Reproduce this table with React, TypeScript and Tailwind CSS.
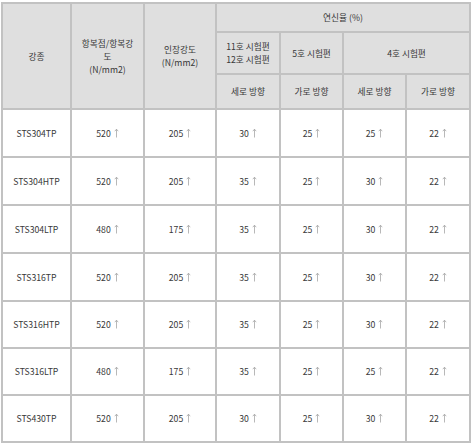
import React from 'react';

type Row = {
  grade: string;
  yieldPt: string;
  tensile: string;
  e11: string;
  e5: string;
  e4v: string;
  e4h: string;
};

const rows: Row[] = [
  { grade: 'STS304TP', yieldPt: '520', tensile: '205', e11: '30', e5: '25', e4v: '25', e4h: '22' },
  { grade: 'STS304HTP', yieldPt: '520', tensile: '205', e11: '35', e5: '25', e4v: '30', e4h: '22' },
  { grade: 'STS304LTP', yieldPt: '480', tensile: '175', e11: '35', e5: '25', e4v: '30', e4h: '22' },
  { grade: 'STS316TP', yieldPt: '520', tensile: '205', e11: '35', e5: '25', e4v: '30', e4h: '22' },
  { grade: 'STS316HTP', yieldPt: '520', tensile: '205', e11: '35', e5: '25', e4v: '30', e4h: '22' },
  { grade: 'STS316LTP', yieldPt: '480', tensile: '175', e11: '35', e5: '25', e4v: '25', e4h: '22' },
  { grade: 'STS430TP', yieldPt: '520', tensile: '205', e11: '30', e5: '25', e4v: '30', e4h: '22' },
];

const head = 'bg-[#dfdfdf] flex items-center justify-center text-center';
const cell = 'bg-white flex items-center justify-center text-center';

// thin up arrow, the font glyph is too small here
const Up = ({ v }: { v: string }) => (
  <span className="inline-flex items-center">
    {v}
    <svg width="5" height="10" viewBox="0 0 5 10" className="ml-[3px] mb-px">
      <path d="M2.5 1.2V9.5M0.8 3.2L2.5 1.2L4.2 3.2" stroke="#a6a6a6" strokeWidth="0.8" fill="none" />
    </svg>
  </span>
);

export default function App() {
  return (
    <div className="bg-white w-[474px] h-[445px] pt-[2px] pl-px">
      <div className="grid w-fit grid-cols-[67px_71px_70px_62px_61px_61px_62px] grid-rows-[27px_40px_33px_46px_46px_46px_46px_45px_45px_45px] gap-[2px] p-[2px] bg-[#c2c2c2] text-[8.7px] leading-[13px] text-[#383838] font-['Noto_Sans_CJK_KR','Noto_Sans',sans-serif]">
        <div className={`${head} row-span-3`}>강종</div>
        <div className={`${head} row-span-3`}>
          항복점/항복강
          <br />
          도
          <br />
          (N/mm2)
        </div>
        <div className={`${head} row-span-3`}>
          인장강도
          <br />
          (N/mm2)
        </div>
        <div className={`${head} col-span-4`}>연신율 (%)</div>
        <div className={head}>
          11호 시험편
          <br />
          12호 시험편
        </div>
        <div className={head}>5호 시험편</div>
        <div className={`${head} col-span-2`}>4호 시험편</div>
        <div className={head}>세로 방향</div>
        <div className={head}>가로 방향</div>
        <div className={head}>세로 방향</div>
        <div className={head}>가로 방향</div>
        {rows.map((r) => (
          <React.Fragment key={r.grade}>
            <div className={cell}>{r.grade}</div>
            <div className={cell}><Up v={r.yieldPt} /></div>
            <div className={cell}><Up v={r.tensile} /></div>
            <div className={cell}><Up v={r.e11} /></div>
            <div className={cell}><Up v={r.e5} /></div>
            <div className={cell}><Up v={r.e4v} /></div>
            <div className={cell}><Up v={r.e4h} /></div>
          </React.Fragment>
        ))}
      </div>
    </div>
  );
}
